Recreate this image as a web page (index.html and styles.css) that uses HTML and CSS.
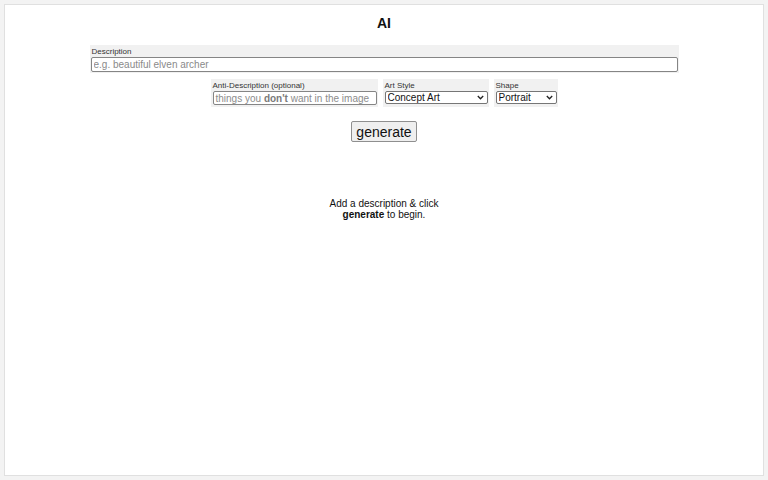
FILE: index.html
```html
<!DOCTYPE html>
<html>
<head>
<meta charset="utf-8">
<link rel="stylesheet" href="styles.css">
</head>
<body>
<div class="card">
  <h1 class="title">AI</h1>
  <div class="field field-wide">
    <label class="label">Description</label>
    <input class="input input-wide" type="text" placeholder="e.g. beautiful elven archer">
  </div>
  <div class="row">
    <div class="field">
      <label class="label">Anti-Description (optional)</label>
      <div class="fake-input">things you <b>don't</b> want in the image</div>
    </div>
    <div class="field">
      <label class="label">Art Style</label>
      <div class="select-wrap">
        <select class="select select-style"><option>Concept Art</option></select>
        <svg class="chev" width="7" height="5" viewBox="0 0 7 5"><path d="M0.8 1 L3.5 3.8 L6.2 1" fill="none" stroke="#222" stroke-width="1.3"/></svg>
      </div>
    </div>
    <div class="field">
      <label class="label">Shape</label>
      <div class="select-wrap">
        <select class="select select-shape"><option>Portrait</option></select>
        <svg class="chev" width="7" height="5" viewBox="0 0 7 5"><path d="M0.8 1 L3.5 3.8 L6.2 1" fill="none" stroke="#222" stroke-width="1.3"/></svg>
      </div>
    </div>
  </div>
  <div class="actions">
    <button class="btn">generate</button>
  </div>
  <p class="hint">Add a description &amp; click<br><b>generate</b> to begin.</p>
</div>
</body>
</html>
```
FILE: styles.css
```css
html, body {
  margin: 0;
  padding: 0;
}
body {
  background: #f3f3f3;
  padding: 4px;
  font-family: "Liberation Sans", Arial, sans-serif;
  height: 480px;
  box-sizing: border-box;
}
.card {
  background: #fff;
  border: 1px solid #e0e0e0;
  height: 472px;
  box-sizing: border-box;
  display: flex;
  flex-direction: column;
  align-items: center;
}
.title {
  font-size: 14px;
  font-weight: bold;
  margin: 10px 0 0 0;
  line-height: 16px;
  color: #111;
}
.field {
  background: #f1f1f1;
  padding: 1px 1px 2px 1px;
  display: flex;
  flex-direction: column;
  box-sizing: border-box;
}
.field-wide {
  width: 589px;
  margin-top: 14px;
  padding-bottom: 1px;
}
.label {
  font-size: 8px;
  line-height: 11px;
  color: #333;
  font-weight: normal;
  padding-left: 1px;
}
.field-wide .label {
  line-height: 11px;
}
.input, .fake-input {
  font-family: "Liberation Sans", Arial, sans-serif;
  font-size: 10px;
  height: 15px;
  box-sizing: border-box;
  border: 1px solid #858585;
  border-radius: 2px;
  padding: 0 2px;
  margin: 0;
  background: #fff;
  color: #111;
}
.input::placeholder {
  color: #8a8a8a;
}
.input-wide {
  width: 100%;
}
.fake-input {
  width: 164px;
  height: 16px;
  color: #8c8c8c;
  line-height: 14px;
  white-space: nowrap;
  overflow: hidden;
  margin-left: 1px;
}
.fake-input b {
  color: #7a7a7a;
}
.row {
  display: flex;
  gap: 5px;
  margin-top: 6px;
  align-items: flex-start;
}
.row .field {
  height: 28px;
}
.select-wrap {
  position: relative;
  display: flex;
  margin-left: 1px;
}
.select {
  font-family: "Liberation Sans", Arial, sans-serif;
  font-size: 10px;
  height: 13px;
  line-height: 11px;
  margin: 0;
  padding: 0 0 0 2px;
  border: 1px solid #767676;
  border-radius: 2px;
  background: #fff;
  color: #111;
  box-sizing: border-box;
  appearance: none;
  -webkit-appearance: none;
}
.chev {
  position: absolute;
  right: 4px;
  top: 4px;
}
.select-style {
  width: 103px;
}
.select-shape {
  width: 61px;
}
.actions {
  margin-top: 14px;
}
.btn {
  font-family: "Liberation Sans", Arial, sans-serif;
  font-size: 14px;
  height: 21px;
  padding: 0 4px;
  border: 1px solid #8f8f8f;
  border-radius: 2px;
  background: #efefef;
  color: #111;
}
.hint {
  font-size: 10px;
  line-height: 11px;
  text-align: center;
  margin: 56px 0 0 0;
  color: #111;
}
```
